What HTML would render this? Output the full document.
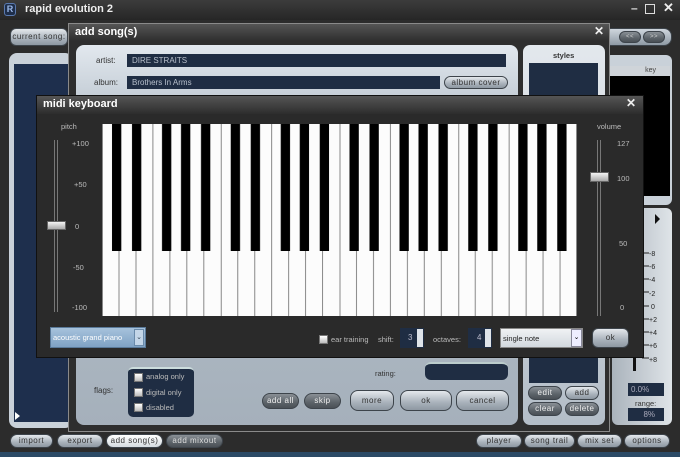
<!DOCTYPE html>
<html><head><meta charset="utf-8"><style>
*{box-sizing:border-box;margin:0;padding:0}
body{width:680px;height:457px;overflow:hidden;background:#2c2c2c;font-family:"Liberation Sans",sans-serif;position:relative}
.a{position:absolute}
.btn{position:absolute;border-radius:8px;background:linear-gradient(#e4e8ec,#a9b2bb 60%,#8e98a2);border:1px solid #3d444b;font-size:8px;color:#333;text-align:center;letter-spacing:.5px}
.dbtn{background:linear-gradient(#8a9096,#5c6369 60%,#4a5056);color:#ddd}
.navy{background:#1f2d43;position:absolute}
.lbl{position:absolute;font-size:7.5px;color:#bbb}
.cb{position:absolute;width:9px;height:9px;background:linear-gradient(#fff,#bbb);border:1px solid #777}
</style></head><body>
<div class="a" style="left:0;top:0;width:680px;height:20px;background:linear-gradient(#3c3c3c,#262626)"></div>
<div class="a" style="left:4px;top:3px;width:12px;height:13px;border:1px solid #5a7ab0;border-radius:3px;background:#1e2e4a;color:#9bb8e8;font-size:9px;font-weight:bold;text-align:center;line-height:11px">R</div>
<div class="a" style="left:25px;top:3px;color:#eee;font-size:11px;font-weight:bold">rapid evolution 2</div>
<div class="a" style="left:631px;top:1px;color:#ddd;font-size:12px;font-weight:bold">–</div>
<div class="a" style="left:645px;top:4px;width:10px;height:10px;border:1.5px solid #ddd"></div>
<div class="a" style="left:663px;top:0px;color:#eee;font-size:13px;font-weight:bold">✕</div>
<div class="btn" style="left:10px;top:28px;width:58px;height:18px;line-height:16px;border-radius:6px">current song:</div>
<div class="btn" style="left:603px;top:28px;width:69px;height:18px;border-radius:8px;background:linear-gradient(#cfd6dd,#8f9aa5)"></div>
<div class="btn dbtn" style="left:619px;top:31px;width:22px;height:12px;font-size:6px;line-height:10px;color:#ccc">&lt;&lt;</div>
<div class="btn dbtn" style="left:643px;top:31px;width:22px;height:12px;font-size:6px;line-height:10px;color:#ccc">&gt;&gt;</div>
<div class="a" style="left:9px;top:53px;width:64px;height:375px;border-radius:8px;background:#c9d1d9"></div>
<div class="navy" style="left:14px;top:64px;width:58px;height:358px;background:#1e2f4d"></div>
<div class="a" style="left:15px;top:412px;border-left:5px solid #fff;border-top:4px solid transparent;border-bottom:4px solid transparent"></div>
<div class="a" style="left:605px;top:55px;width:67px;height:150px;border-radius:6px;background:#c9d1d9"></div>
<div class="a" style="left:608px;top:66px;width:62px;height:130px;background:#000"></div>
<div class="a" style="left:608px;top:66px;width:62px;height:10px;background:#cfd4d9;font-size:7px;color:#444;text-align:right;padding-right:14px;line-height:10px">key</div>
<div class="a" style="left:612px;top:208px;width:60px;height:217px;border-radius:6px;background:linear-gradient(90deg,#aab3bc,#dfe4e8)"></div>
<div class="a" style="left:655px;top:214px;border-left:5px solid #111;border-top:5px solid transparent;border-bottom:5px solid transparent"></div>
<svg class="a" style="left:640px;top:250px" width="10" height="112"><g stroke="#222" stroke-width="1"><line x1="2" y1="3" x2="9" y2="3"/><line x1="2" y1="16" x2="9" y2="16"/><line x1="2" y1="29" x2="9" y2="29"/><line x1="2" y1="42" x2="9" y2="42"/><line x1="2" y1="56" x2="9" y2="56"/><line x1="2" y1="69" x2="9" y2="69"/><line x1="2" y1="82" x2="9" y2="82"/><line x1="2" y1="95" x2="9" y2="95"/><line x1="2" y1="108" x2="9" y2="108"/></g></svg>
<div class="a" style="left:649px;top:248px;font-size:7px;color:#222;line-height:13.2px">-8<br>-6<br>-4<br>-2<br>&nbsp;0<br>+2<br>+4<br>+6<br>+8</div>
<div class="a" style="left:633px;top:358px;width:3px;height:13px;background:#111"></div>
<div class="navy" style="left:628px;top:383px;width:36px;height:13px;font-size:8px;color:#aab;padding:2px 3px">0.0%</div>
<div class="a" style="left:635px;top:399px;font-size:7.5px;color:#333">range:</div>
<div class="navy" style="left:628px;top:408px;width:36px;height:13px;font-size:8px;color:#aab;text-align:right;padding:2px 9px">8%</div>
<div class="btn" style="left:10px;top:434px;width:43px;height:14px;line-height:12px">import</div>
<div class="btn" style="left:57px;top:434px;width:46px;height:14px;line-height:12px">export</div>
<div class="btn" style="left:106px;top:434px;width:57px;height:14px;line-height:12px;background:linear-gradient(#fff,#d5dbe0)">add song(s)</div>
<div class="btn dbtn" style="left:166px;top:434px;width:57px;height:14px;line-height:12px;color:#ddd">add mixout</div>
<div class="btn" style="left:476px;top:434px;width:46px;height:14px;line-height:12px">player</div>
<div class="btn" style="left:524px;top:434px;width:51px;height:14px;line-height:12px">song trail</div>
<div class="btn" style="left:577px;top:434px;width:45px;height:14px;line-height:12px">mix set</div>
<div class="btn" style="left:624px;top:434px;width:46px;height:14px;line-height:12px">options</div>
<div class="a" style="left:0;top:452px;width:680px;height:5px;background:#2b4a66"></div>
<div class="a" style="left:68px;top:23px;width:542px;height:409px;background:#2e2e2e;border:1px solid #8a8a8a"></div>
<div class="a" style="left:69px;top:24px;width:540px;height:17px;background:linear-gradient(#555,#2e2e2e);color:#fff;font-size:11px;font-weight:bold;padding:2px 6px">add song(s)</div>
<div class="a" style="left:594px;top:24px;color:#eee;font-size:12px;font-weight:bold">✕</div>
<div class="a" style="left:76px;top:45px;width:442px;height:380px;border-radius:8px;background:linear-gradient(#e2e8ee,#b9c3cd 20%,#a5b0bb)"></div>
<div class="a" style="left:96px;top:56px;font-size:8px;color:#333">artist:</div>
<div class="navy" style="left:127px;top:54px;width:379px;height:13px;font-size:8px;color:#b8c0cc;padding:2px 5px">DIRE STRAITS</div>
<div class="a" style="left:94px;top:78px;font-size:8px;color:#333">album:</div>
<div class="navy" style="left:127px;top:76px;width:313px;height:13px;font-size:8px;color:#b8c0cc;padding:2px 5px">Brothers In Arms</div>
<div class="btn" style="left:444px;top:76px;width:64px;height:13px;line-height:11px">album cover</div>
<div class="a" style="left:523px;top:45px;width:82px;height:380px;border-radius:7px;background:linear-gradient(#e3e8ed,#b4bec8)"></div>
<div class="a" style="left:553px;top:51px;font-size:7.5px;color:#333;font-weight:bold">styles</div>
<div class="navy" style="left:529px;top:63px;width:69px;height:320px"></div>
<div class="btn dbtn" style="left:528px;top:386px;width:34px;height:14px;line-height:12px;color:#eee">edit</div>
<div class="btn" style="left:565px;top:386px;width:34px;height:14px;line-height:12px">add</div>
<div class="btn dbtn" style="left:528px;top:402px;width:34px;height:14px;line-height:12px;color:#eee">clear</div>
<div class="btn dbtn" style="left:565px;top:402px;width:34px;height:14px;line-height:12px;color:#eee">delete</div>
<div class="a" style="left:94px;top:386px;font-size:8px;color:#333">flags:</div>
<div class="navy" style="left:128px;top:367px;width:66px;height:50px;border-radius:5px;border-top:2px solid #cdd"></div>
<div class="cb" style="left:134px;top:373px"></div><div class="lbl" style="left:146px;top:372px">analog only</div>
<div class="cb" style="left:134px;top:388px"></div><div class="lbl" style="left:146px;top:388px">digital only</div>
<div class="cb" style="left:134px;top:403px"></div><div class="lbl" style="left:146px;top:403px">disabled</div>
<div class="a" style="left:375px;top:369px;font-size:7.5px;color:#333">rating:</div>
<div class="navy" style="left:425px;top:362px;width:83px;height:18px;border-radius:6px;border-top:2px solid #bcc"></div>
<div class="btn dbtn" style="left:262px;top:393px;width:37px;height:16px;line-height:14px;color:#eee">add all</div>
<div class="btn dbtn" style="left:304px;top:393px;width:37px;height:16px;line-height:14px;color:#eee">skip</div>
<div class="btn" style="left:350px;top:390px;width:44px;height:21px;line-height:19px">more</div>
<div class="btn" style="left:400px;top:390px;width:52px;height:21px;line-height:19px">ok</div>
<div class="btn" style="left:456px;top:390px;width:53px;height:21px;line-height:19px">cancel</div>
<div class="a" style="left:36px;top:95px;width:608px;height:263px;background:#2a2a2a;border:1px solid #111"></div>
<div class="a" style="left:37px;top:96px;width:606px;height:18px;background:linear-gradient(#555,#2d2d2d);color:#fff;font-size:11px;font-weight:bold;padding:2px 6px">midi keyboard</div>
<div class="a" style="left:626px;top:96px;color:#eee;font-size:12px;font-weight:bold">✕</div>
<div class="lbl" style="left:61px;top:122px">pitch</div>
<div class="a" style="left:54px;top:140px;width:4px;height:172px;border-left:1px solid #777;border-right:1px solid #777"></div>
<div class="a" style="left:47px;top:221px;width:19px;height:9px;background:linear-gradient(#f4f4f4,#aaa);border:1px solid #666"></div>
<div class="lbl" style="left:72px;top:139px">+100</div>
<div class="lbl" style="left:74px;top:180px">+50</div>
<div class="lbl" style="left:75px;top:222px">0</div>
<div class="lbl" style="left:73px;top:263px">-50</div>
<div class="lbl" style="left:72px;top:303px">-100</div>
<div class="lbl" style="left:597px;top:122px">volume</div>
<div class="a" style="left:597px;top:140px;width:4px;height:176px;border-left:1px solid #777;border-right:1px solid #777"></div>
<div class="a" style="left:590px;top:172px;width:19px;height:10px;background:linear-gradient(#f4f4f4,#aaa);border:1px solid #666"></div>
<div class="lbl" style="left:617px;top:139px">127</div>
<div class="lbl" style="left:617px;top:174px">100</div>
<div class="lbl" style="left:619px;top:239px">50</div>
<div class="lbl" style="left:620px;top:303px">0</div>
<svg class="a" style="left:102px;top:124px" width="475" height="192" viewBox="0 0 475 192">
<defs><pattern id="oct" x="0" y="0" width="118.75" height="192" patternUnits="userSpaceOnUse">
<rect width="118.75" height="192" fill="#fcfcfc"/>
<g stroke="#888" stroke-width="1">
<line x1="0.5" y1="0" x2="0.5" y2="192"/><line x1="17" y1="0" x2="17" y2="192"/><line x1="34" y1="0" x2="34" y2="192"/><line x1="50.9" y1="0" x2="50.9" y2="192"/><line x1="67.9" y1="0" x2="67.9" y2="192"/><line x1="84.8" y1="0" x2="84.8" y2="192"/><line x1="101.8" y1="0" x2="101.8" y2="192"/></g>
<g fill="#000"><rect x="10" y="0" width="9.3" height="127"/><rect x="30" y="0" width="9.3" height="127"/><rect x="60" y="0" width="9.3" height="127"/><rect x="79" y="0" width="9.3" height="127"/><rect x="99" y="0" width="9.3" height="127"/></g>
</pattern></defs>
<rect width="475" height="192" fill="url(#oct)"/>
<line x1="474.5" y1="0" x2="474.5" y2="192" stroke="#888"/>
</svg>
<div class="a" style="left:50px;top:327px;width:96px;height:21px;background:linear-gradient(#a6c2dc,#7fa2c4);border:1px solid #5a7a9a;font-size:7.5px;color:#fff;padding:5px 2px">acoustic grand piano</div>
<div class="a" style="left:134px;top:329px;width:10px;height:17px;background:#c4d6e8;border:1px solid #6a8aaa;font-size:7px;color:#345;text-align:center;line-height:15px">⌄</div>
<div class="cb" style="left:319px;top:335px"></div>
<div class="lbl" style="left:331px;top:335px">ear training</div>
<div class="lbl" style="left:378px;top:335px">shift:</div>
<div class="navy" style="left:400px;top:328px;width:24px;height:20px;font-size:8px;color:#bbc;padding:5px 10px 0 8px">3</div>
<div class="a" style="left:417px;top:329px;width:6px;height:18px;background:#dfe4e9"></div>
<div class="lbl" style="left:433px;top:335px">octaves:</div>
<div class="navy" style="left:468px;top:328px;width:24px;height:20px;font-size:8px;color:#bbc;padding:5px 10px 0 9px">4</div>
<div class="a" style="left:485px;top:329px;width:6px;height:18px;background:#dfe4e9"></div>
<div class="a" style="left:500px;top:328px;width:83px;height:20px;background:linear-gradient(#f0f2f4,#d2d8de);border:1px solid #888;font-size:7.5px;color:#222;padding:5px 2px">single note</div>
<div class="a" style="left:571px;top:329px;width:11px;height:18px;background:#eef;border:1px solid #889;font-size:7px;text-align:center;line-height:16px">⌄</div>
<div class="btn" style="left:592px;top:328px;width:37px;height:20px;line-height:18px;border-radius:6px">ok</div>
</body></html>
